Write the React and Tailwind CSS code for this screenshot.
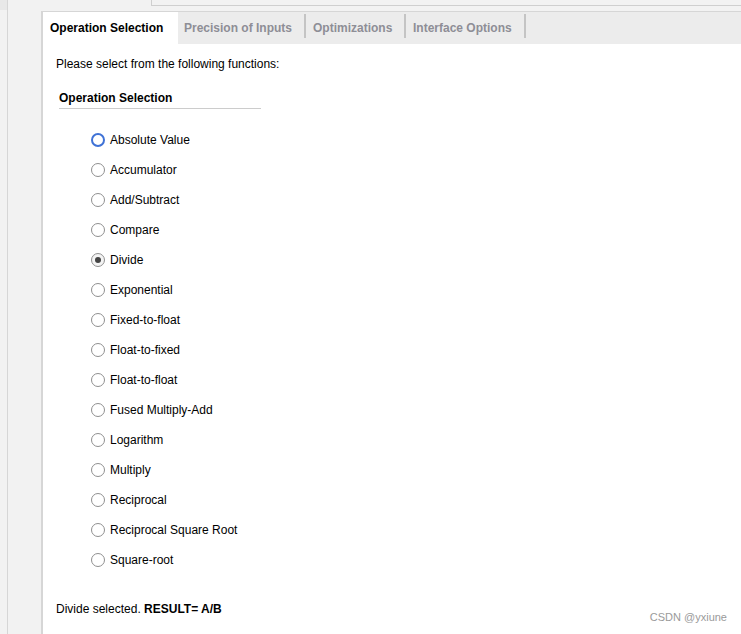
import React from "react";

const items = [
  "Absolute Value",
  "Accumulator",
  "Add/Subtract",
  "Compare",
  "Divide",
  "Exponential",
  "Fixed-to-float",
  "Float-to-fixed",
  "Float-to-float",
  "Fused Multiply-Add",
  "Logarithm",
  "Multiply",
  "Reciprocal",
  "Reciprocal Square Root",
  "Square-root",
];

function Radio({ state }) {
  if (state === "focus") {
    return <span className="w-[14px] h-[14px] rounded-full border-2 border-[#3f72d6] bg-white box-border" />;
  }
  if (state === "checked") {
    return (
      <span className="w-[14px] h-[14px] rounded-full border border-[#8f8f8f] bg-[#f4f4f4] box-border flex items-center justify-center">
        <span className="w-[6px] h-[6px] rounded-full bg-[#444]" />
      </span>
    );
  }
  return <span className="w-[14px] h-[14px] rounded-full border border-[#8f8f8f] bg-white box-border" />;
}

export default function App() {
  const font = { fontFamily: '"Liberation Sans", Arial, sans-serif' };
  return (
    <div className="w-[741px] h-[634px] bg-[#f2f2f2] flex overflow-hidden relative text-[12px] text-black" style={font}>
      <div className="w-[8px] h-full border-r border-[#d6d6d6] flex flex-col">
        <div className="h-[10px] bg-[#e8e8e8]" />
      </div>
      <div className="flex-1 flex flex-col">
        <div className="h-[11px] flex">
          <div className="ml-[143px] flex-1 h-[6px] border-l border-b border-[#cfcfcf] bg-[#f2f2f2]" />
        </div>
        <div className="flex-1 flex">
          <div className="w-[33px]" />
          <div className="flex-1 flex flex-col border-l-2 border-t border-[#d6d6d6] bg-white">
            <div className="h-[32px] bg-[#ececec] flex font-bold">
              <div className="w-[135px] bg-white flex items-center pl-[7px]">Operation Selection</div>
              <div className="w-[128px] flex items-center pl-[6px] text-[#8e8e96] relative">
                Precision of Inputs
                <span className="absolute right-0 top-[2px] h-[24px] w-[2px] bg-[#c4c4c4]" />
              </div>
              <div className="w-[100px] flex items-center pl-[7px] text-[#8e8e96] relative">
                Optimizations
                <span className="absolute right-0 top-[2px] h-[24px] w-[2px] bg-[#c4c4c4]" />
              </div>
              <div className="w-[120px] flex items-center pl-[7px] text-[#8e8e96] relative">
                Interface Options
                <span className="absolute right-0 top-[2px] h-[24px] w-[2px] bg-[#c4c4c4]" />
              </div>
            </div>
            <div className="flex flex-col pl-[13px] pt-[13px]">
              <div className="leading-[14px]">Please select from the following functions:</div>
              <div className="mt-[20px] ml-[3px] w-[202px] border-b border-[#cccccc] pb-[3px] font-bold leading-[14px]">
                Operation Selection
              </div>
              <div className="mt-[16px] ml-[35px] flex flex-col">
                {items.map((label, i) => (
                  <div key={label} className="h-[30px] flex items-center gap-[5px]">
                    <Radio state={i === 0 ? "focus" : label === "Divide" ? "checked" : "none"} />
                    <span className="leading-[14px]">{label}</span>
                  </div>
                ))}
              </div>
              <div className="mt-[27px] leading-[14px]">
                Divide selected. <span className="font-bold">RESULT= A/B</span>
              </div>
            </div>
          </div>
        </div>
      </div>
      <div className="absolute right-[14px] top-[611px] text-[11px] leading-[13px] text-[#9a9a9a]">CSDN @yxiune</div>
    </div>
  );
}
